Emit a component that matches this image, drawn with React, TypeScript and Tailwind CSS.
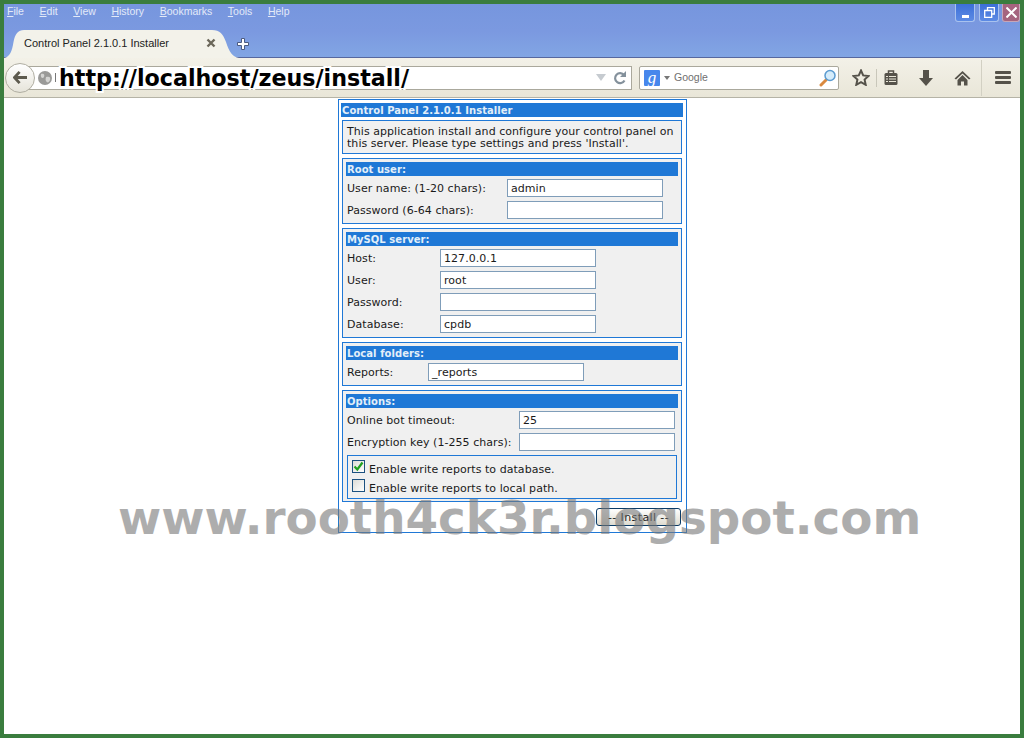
import { Fragment } from 'react'

const verdana = 'font-["DejaVu_Sans",sans-serif] text-[11px] tracking-[0.05px] text-[#1a1a1a]'

function Heading({ children }: { children: string }) {
  return <div className="h-[14px] bg-[#1f78d6] pl-[1px] text-[10px] leading-[16px] font-bold tracking-[0.05px] text-[#e3eff9]">{children}</div>
}

function Field({ label, value, labelWidth }: { label: string; value?: string; labelWidth: string }) {
  return (
    <div className="flex h-[22px] items-center pl-[1px]">
      <span className={`${labelWidth} shrink-0 pt-[2px] whitespace-nowrap`}>{label}</span>
      <div className="h-[18px] w-[156px] border border-[#7f9db9] bg-white pl-[3px] leading-[18px]">{value}</div>
    </div>
  )
}

function Box({ title, children, height }: { title: string; children: React.ReactNode; height: string }) {
  return (
    <section className={`${height} border border-[#1f78d6] bg-[#f0f0f0] px-[3px] pt-[3px]`}>
      <Heading>{title}</Heading>
      <div className="pt-[1px]">{children}</div>
    </section>
  )
}

function Toolbar() {
  return (
    <div className="flex h-[40px] items-center border-b border-[#b5b3a6] bg-gradient-to-b from-[#f3f1e8] to-[#e9e6d8] pr-[8px]">
      <div className="relative z-10 ml-[1px] flex h-[30px] w-[30px] shrink-0 items-center justify-center rounded-full border border-[#b0aea2] bg-gradient-to-b from-white to-[#e6e4da]">
        <svg width="15" height="13" viewBox="0 0 16 14">
          <path d="M7 1 1.5 7 7 13M2 7h13" fill="none" stroke="#5d5a4e" strokeWidth="3" />
        </svg>
      </div>
      <div className="relative ml-[-6px] flex h-[24px] w-[603px] items-center border border-[#aaa89c] bg-white pl-[7px]">
        <svg width="16" height="16" viewBox="0 0 16 16" className="shrink-0">
          <circle cx="8" cy="8" r="7" fill="#9a9a98" />
          <path d="M4 4c3-1 4 1 3 3S3 8 4 4Zm5 3c3-1 5 0 4 3s-3 3-4 1 0-3 0-4Z" fill="#d4d4d2" />
        </svg>
        <div className="ml-[2px] h-[9px] w-[1px] bg-[#777]" />
        <span className='ml-[3px] whitespace-nowrap font-["DejaVu_Sans",sans-serif] text-[22.2px] leading-[24px] font-bold tracking-normal text-black [text-shadow:2px_2px_0_#fff,-2px_-2px_0_#fff,2px_-2px_0_#fff,-2px_2px_0_#fff]'>
          http://localhost/zeus/install/
        </span>
        <svg width="10" height="7" viewBox="0 0 10 7" className="ml-auto">
          <path d="M0 0h10L5 7Z" fill="#c6cbd0" />
        </svg>
        <svg width="14" height="14" viewBox="0 0 14 14" className="mr-[4px] ml-[7px]">
          <path d="M11.5 9.5A5 5 0 1 1 11 4" fill="none" stroke="#84919c" strokeWidth="2.2" />
          <path d="M13 0v6H7Z" fill="#84919c" />
        </svg>
      </div>
      <div className="ml-[7px] flex h-[24px] w-[200px] items-center rounded-[2px] border border-[#aaa89c] bg-white pl-[4px]">
        <div className='flex h-[16px] w-[16px] items-center justify-center rounded-[1px] bg-[#4787ec] font-["Liberation_Serif",serif] text-[17px] leading-none text-white italic'>g</div>
        <svg width="6" height="4" viewBox="0 0 6 4" className="ml-[4px]">
          <path d="M0 0h6L3 4Z" fill="#777" />
        </svg>
        <span className='ml-[4px] font-["Liberation_Sans",sans-serif] text-[10.5px] tracking-normal text-[#6f6f6f]'>Google</span>
        <svg width="18" height="18" viewBox="0 0 18 18" className="mr-[1px] ml-auto">
          <path d="M7 11 2 16" stroke="#d9893f" strokeWidth="3" strokeLinecap="round" />
          <circle cx="11" cy="6.5" r="5" fill="#d5ecfb" stroke="#5b9bd0" strokeWidth="1.5" />
        </svg>
      </div>
      <svg width="18" height="17" viewBox="0 0 18 17" className="ml-[13px]">
        <path d="M9 1.5 11.2 6.4 16.5 7 12.6 10.6 13.7 15.8 9 13.1 4.3 15.8 5.4 10.6 1.5 7 6.8 6.4Z" fill="none" stroke="#55524a" strokeWidth="2" />
      </svg>
      <div className="ml-[6px] h-[18px] w-[1px] bg-[#c9c7ba]" />
      <svg width="16" height="16" viewBox="0 0 16 16" className="ml-[6px]">
        <rect x="1.5" y="3" width="13" height="12" rx="1.5" fill="#55524a" />
        <path d="M5.5 3V1h5v2" fill="none" stroke="#55524a" strokeWidth="1.5" />
        <path d="M3 6.5h2M6 6.5h7M3 9h2M6 9h7M3 11.5h2M6 11.5h7" stroke="#e9e6d8" strokeWidth="1" />
      </svg>
      <svg width="16" height="16" viewBox="0 0 16 16" className="ml-[19px]">
        <path d="M5 0h6v8h4l-7 8-7-8h4Z" fill="#55524a" />
      </svg>
      <svg width="17" height="16" viewBox="0 0 17 16" className="ml-[20px]">
        <path d="M8.5 1 0.5 8.5 2 9.5 8.5 3.5 15 9.5 16.5 8.5ZM3.5 10l5-5 5 5v5.5H10v-4H7v4H3.5Z" fill="#55524a" />
      </svg>
      <div className="ml-[10px] h-[36px] w-[1px] bg-[#d2d0c3]" />
      <div className="ml-[13px] flex flex-col gap-[2px]">
        <div className="h-[3px] w-[16px] rounded-[1px] bg-[#55524a]" />
        <div className="h-[3px] w-[16px] rounded-[1px] bg-[#55524a]" />
        <div className="h-[3px] w-[16px] rounded-[1px] bg-[#55524a]" />
      </div>
    </div>
  )
}

function TitleBar() {
  return (
    <div className="relative h-[54px] bg-gradient-to-b from-[#7696de] via-[#7b99e0] to-[#82a6e4]">
      <div className='flex gap-[15.6px] pl-[3px] font-["Liberation_Sans",sans-serif] text-[10.5px] leading-[14px] tracking-normal text-[#e3eaf8]'>
        {['File', 'Edit', 'View', 'History', 'Bookmarks', 'Tools', 'Help'].map((m) => (
          <Fragment key={m}>
            <span>
              <span className="underline">{m[0]}</span>
              {m.slice(1)}
            </span>
          </Fragment>
        ))}
      </div>
      <div className="absolute top-0 right-0 flex gap-[3px]">
        <div className="mr-[1px] flex h-[18px] w-[20px] items-end justify-center rounded-b-[3px] border border-t-0 border-[#a9c2ee] bg-gradient-to-b from-[#3c6fd8] to-[#5d8be4] pb-[3px]">
          <div className="h-[3px] w-[7px] bg-white" />
        </div>
        <div className="flex h-[18px] w-[20px] items-center justify-center rounded-b-[3px] border border-t-0 border-[#a9c2ee] bg-gradient-to-b from-[#3c6fd8] to-[#5d8be4]">
          <svg width="11" height="11" viewBox="0 0 11 11">
            <path d="M3.5 3V.7h6.8v6.3H8M.7 3.5h7v6.8H.7Z" fill="none" stroke="#fff" strokeWidth="1.3" />
          </svg>
        </div>
        <div className="flex h-[18px] w-[18px] items-center justify-center rounded-b-[3px] border border-t-0 border-[#c6a6b8] bg-[#a5647f]">
          <svg width="11" height="11" viewBox="0 0 11 11">
            <path d="M.5.5l10 10M10.5.5l-10 10" stroke="#fff" strokeWidth="2" />
          </svg>
        </div>
      </div>
      <div className="absolute right-0 bottom-0 left-0 h-[1px] bg-[#56689f]" />
      <svg width="236" height="28" viewBox="0 26 236 28" className="absolute bottom-0 left-0">
        <path d="M0 54C6 53 8 47 9.5 38 11 30 14 26 20 26H208C216 26 219 30 222 38 225 48 229 53 235 54Z" fill="#f3f2ea" />
      </svg>
      <div className='absolute bottom-[1px] left-[20px] flex h-[27px] w-[192px] items-center pb-[1px] font-["Liberation_Sans",sans-serif] text-[11px] tracking-normal text-[#222]'>
        <span>Control Panel 2.1.0.1 Installer</span>
        <svg width="10" height="10" viewBox="0 0 10 10" className="ml-auto">
          <path d="M1.5 1.5l7 7M8.5 1.5l-7 7" stroke="#6b675a" strokeWidth="2.4" />
        </svg>
      </div>
      <svg width="12" height="12" viewBox="0 0 12 12" className="absolute bottom-[8px] left-[233px]">
        <path d="M4.5.5h3v4h4v3h-4v4h-3v-4h-4v-3h4Z" fill="#fff" stroke="#4b5a80" strokeWidth="1" />
      </svg>
    </div>
  )
}

export default function App() {
  return (
    <div className={`relative flex h-[738px] w-[1024px] flex-col overflow-hidden border-4 border-[#3a7d3e] bg-white ${verdana}`}>
      <TitleBar />
      <Toolbar />
      <main className="flex flex-1 justify-center pt-[1px] pl-[1px]">
        <div className="h-[434px] w-[349px] border border-[#1f78d6] bg-white pt-[3px] pr-[3px] pl-[2px]">
          <div className="mb-[3px]">
            <Heading>Control Panel 2.1.0.1 Installer</Heading>
          </div>
          <div className="mx-[1px] flex flex-col gap-[4px]">
            <section className="h-[34px] border border-[#1f78d6] bg-[#f0f0f0] px-[4px] pt-[5px] leading-[12px]">
              This application install and configure your control panel on this server. Please type settings and press 'Install'.
            </section>
            <Box title="Root user:" height="h-[66px]">
              <Field label="User name: (1-20 chars):" value="admin" labelWidth="w-[160px]" />
              <Field label="Password (6-64 chars):" labelWidth="w-[160px]" />
            </Box>
            <Box title="MySQL server:" height="h-[110px]">
              <Field label="Host:" value="127.0.0.1" labelWidth="w-[93px]" />
              <Field label="User:" value="root" labelWidth="w-[93px]" />
              <Field label="Password:" labelWidth="w-[93px]" />
              <Field label="Database:" value="cpdb" labelWidth="w-[93px]" />
            </Box>
            <Box title="Local folders:" height="h-[44px]">
              <Field label="Reports:" value="_reports" labelWidth="w-[81px]" />
            </Box>
            <Box title="Options:" height="h-[112px]">
              <Field label="Online bot timeout:" value="25" labelWidth="w-[172px]" />
              <Field label="Encryption key (1-255 chars):" labelWidth="w-[172px]" />
              <div className="mx-[1px] mt-[2px] h-[44px] border border-[#1f78d6] pl-[4px]">
                <div className="flex h-[19px] items-end">
                  <span className="relative mb-[2px] flex h-[13px] w-[13px] shrink-0 items-center justify-center border border-[#1c5180] bg-gradient-to-br from-[#dcdcd7] to-white">
                    <svg width="11" height="11" viewBox="0 0 11 11">
                      <path d="M1.5 5.5 4.3 8.5 9.5 1.5" fill="none" stroke="#21a121" strokeWidth="2.2" />
                    </svg>
                  </span>
                  <span className="mb-[-1px] ml-[4px] leading-[12px]">Enable write reports to database.</span>
                </div>
                <div className="flex h-[19px] items-end">
                  <span className="mb-[2px] h-[13px] w-[13px] shrink-0 border border-[#1c5180] bg-gradient-to-br from-[#dcdcd7] to-white" />
                  <span className="mb-[-1px] ml-[4px] leading-[12px]">Enable write reports to local path.</span>
                </div>
              </div>
            </Box>
          </div>
          <div className="mt-[6px] mr-[2px] flex justify-end">
            <button className="h-[18px] w-[85px] rounded-[3px] border border-[#0a3a66] bg-gradient-to-b from-white to-[#dedbd0] leading-[17px] tracking-[0.4px]">-- Install --</button>
          </div>
        </div>
      </main>
      <div className='pointer-events-none absolute top-[485px] left-[114px] whitespace-nowrap font-["DejaVu_Sans",sans-serif] text-[46.8px] leading-[58px] font-bold tracking-normal text-[#787878] opacity-60'>
        www.rooth4ck3r.blogspot.com
      </div>
    </div>
  )
}
